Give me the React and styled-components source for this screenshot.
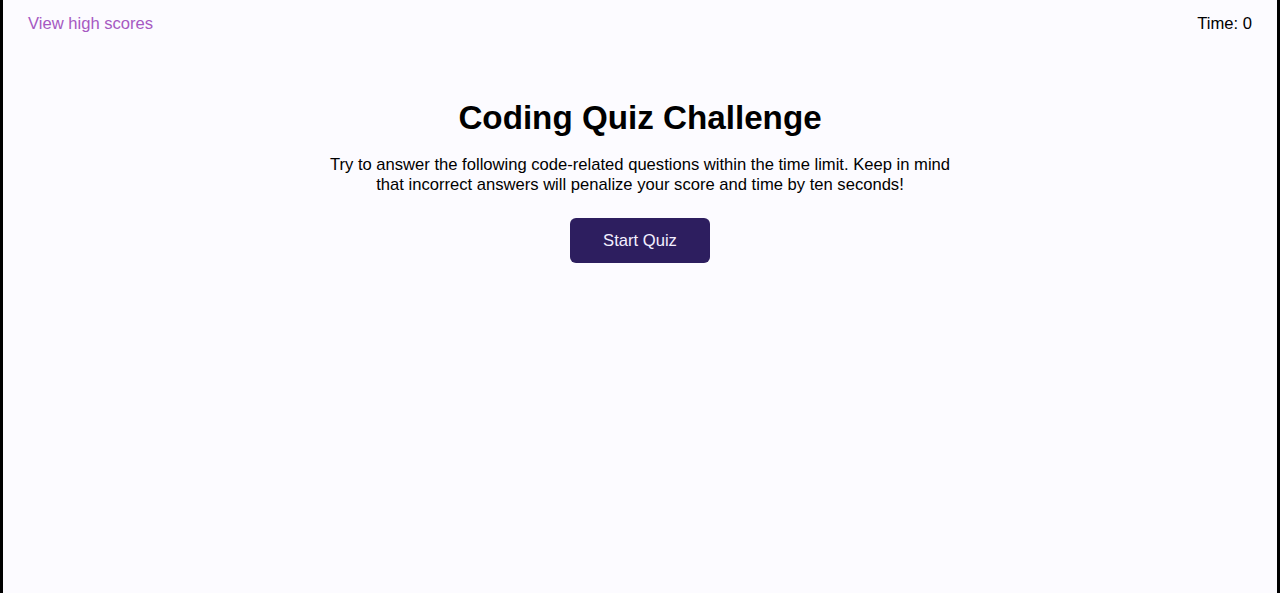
import React from "react";
import styled, { createGlobalStyle } from "styled-components";

const GlobalStyle = createGlobalStyle`
  html, body {
    margin: 0;
    padding: 0;
    height: 100%;
  }
  body {
    background: #000;
    font-family: "Liberation Sans", Arial, sans-serif;
  }
  #root {
    height: 100%;
  }
`;

const Page = styled.div`
  box-sizing: border-box;
  height: 593px;
  margin: 0 3px 0 3px;
  background: #fcfbff;
  color: #000;
`;

const Header = styled.header`
  display: flex;
  justify-content: space-between;
  align-items: center;
  padding: 14px 25px 0 25px;
  font-size: 16.6px;
  line-height: 20px;
`;

const HighScores = styled.a`
  color: #a659c2;
  text-decoration: none;
  cursor: pointer;
`;

const Timer = styled.div`
  color: #000;
`;

const Intro = styled.main`
  display: flex;
  flex-direction: column;
  align-items: center;
  text-align: center;
  padding-top: 64px;
`;

const Title = styled.h1`
  margin: 0;
  font-size: 33.2px;
  line-height: 40px;
  font-weight: 700;
`;

const Lead = styled.p`
  margin: 17px 0 0;
  max-width: 624px;
  font-size: 16.6px;
  line-height: 20px;
`;

const StartButton = styled.button`
  margin-top: 23px;
  width: 140px;
  height: 45px;
  border: none;
  border-radius: 6px;
  background: #2d1e5f;
  color: #f4f0ff;
  font-family: inherit;
  font-size: 16.6px;
  cursor: pointer;
`;

export default function App() {
  return (
    <>
      <GlobalStyle />
      <Page>
        <Header>
          <HighScores>View high scores</HighScores>
          <Timer>Time: 0</Timer>
        </Header>
        <Intro>
          <Title>Coding Quiz Challenge</Title>
          <Lead>
            Try to answer the following code-related questions within the time
            limit. Keep in mind that incorrect answers will penalize your score
            and time by ten seconds!
          </Lead>
          <StartButton>Start Quiz</StartButton>
        </Intro>
      </Page>
    </>
  );
}
